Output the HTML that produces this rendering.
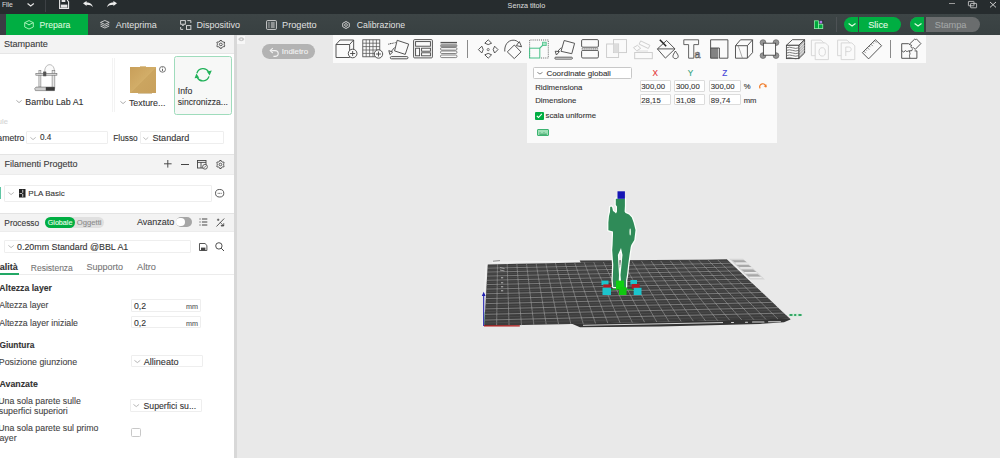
<!DOCTYPE html>
<html><head><meta charset="utf-8">
<style>
*{box-sizing:border-box;margin:0;padding:0}
html,body{width:1000px;height:458px;overflow:hidden;background:#e9e9e9;font-family:"Liberation Sans",sans-serif;color:#333}
.a{position:absolute}
.t{position:absolute;white-space:nowrap;line-height:1;-webkit-text-stroke:0.1px currentColor}
svg{position:absolute;overflow:visible}
</style></head><body>
<div class="a" style="left:0px;top:0px;width:1000.00px;height:13.50px;background:#262c2e"></div>
<div class="t" style="left:1.90px;top:2.04px;font-size:6.8px;color:#d8d8d8;font-weight:400;-webkit-text-stroke:0.05px currentColor">File</div>
<svg style="left:26.6px;top:2.8px;" width="7.40" height="3.60" viewBox="0 0 8 4" preserveAspectRatio="none"><path d="M0.6 0.6 L4 3.4 L7.4 0.6" fill="none" stroke="#e4e4e4" stroke-width="1.3"/></svg>
<div class="a" style="left:45.2px;top:0px;width:0.80px;height:11.70px;background:#3d4145"></div>
<svg style="left:59.1px;top:0px;" width="10.20" height="9.00" viewBox="0 0 10 9" preserveAspectRatio="none"><path d="M0.6 -1 V8.4 H9.4 V2 L7.5 -1" fill="none" stroke="#e6e6e6" stroke-width="1.1"/><rect x="1.8" y="4.6" width="6.4" height="3" fill="#e6e6e6"/><rect x="2.6" y="-1" width="3.6" height="3" fill="#e6e6e6"/></svg>
<svg style="left:83.2px;top:0.9px;" width="10.00" height="6.30" viewBox="0 0 10 7" preserveAspectRatio="none"><path d="M0 2.6 L3.6 0 V1.6 C7 1.6 9.6 3.4 9.8 7 C8.6 5 6.8 4.2 3.6 4.2 V5.6 Z" fill="#eee"/></svg>
<svg style="left:107px;top:0.9px;" width="10.00" height="6.30" viewBox="0 0 10 7" preserveAspectRatio="none"><path d="M10 2.6 L6.4 0 V1.6 C3 1.6 0.4 3.4 0.2 7 C1.4 5 3.2 4.2 6.4 4.2 V5.6 Z" fill="#eee"/></svg>
<div class="t" style="left:507.60px;top:1.71px;font-size:7.2px;color:#dcdcdc;font-weight:400;-webkit-text-stroke:0.05px currentColor">Senza titolo</div>
<div class="a" style="left:948.5px;top:3.4px;width:6.30px;height:0.80px;background:#9a9a9a"></div>
<svg style="left:968px;top:1px;" width="9.00" height="7.00" viewBox="0 0 9 7" preserveAspectRatio="none"><rect x="0.4" y="0.4" width="5.6" height="4.4" rx="0.4" fill="none" stroke="#d5d5d5" stroke-width="0.8"/><rect x="2.6" y="2.4" width="6" height="4.4" rx="0.4" fill="none" stroke="#d5d5d5" stroke-width="0.8"/></svg>
<svg style="left:989.6px;top:1.6px;" width="6.00" height="5.40" viewBox="0 0 6 6" preserveAspectRatio="none"><path d="M0 0 L6 6 M6 0 L0 6" stroke="#d5d5d5" stroke-width="1"/></svg>
<div class="a" style="left:0px;top:13.5px;width:1000.00px;height:21.00px;background:linear-gradient(#3d4546,#384041)"></div>
<div class="a" style="left:0px;top:13.5px;width:6.00px;height:21.00px;background:#3b3d44"></div>
<div class="a" style="left:6px;top:13.5px;width:81.50px;height:21.00px;background:#00ae42"></div>
<svg style="left:24px;top:19.5px;" width="10.00" height="9.50" viewBox="0 0 10 10" preserveAspectRatio="none"><path d="M5 0.6 L9.3 2.8 V7.4 L5 9.5 L0.7 7.4 V2.8 Z M0.7 2.8 L5 5 L9.3 2.8 M5 5 V5.6" fill="none" stroke="#a6f2b6" stroke-width="1"/></svg>
<div class="t" style="left:39.50px;top:20.64px;font-size:8.7px;color:#d7f7dc;font-weight:400;">Prepara</div>
<svg style="left:100.3px;top:20px;" width="9.70" height="8.50" viewBox="0 0 10 9" preserveAspectRatio="none"><path d="M5 0.5 L9.5 2.6 L5 4.7 L0.5 2.6 Z M0.5 4.5 L5 6.6 L9.5 4.5 M0.5 6.4 L5 8.5 L9.5 6.4" fill="none" stroke="#dcdcdc" stroke-width="0.9"/></svg>
<div class="t" style="left:115.70px;top:20.68px;font-size:9px;color:#dedede;font-weight:400;-webkit-text-stroke:0.05px currentColor">Anteprima</div>
<svg style="left:179.7px;top:19.5px;" width="11.50" height="10.00" viewBox="0 0 11 10" preserveAspectRatio="none"><rect x="0.6" y="0.6" width="4.5" height="3.6" fill="none" stroke="#dcdcdc" stroke-width="0.9"/><path d="M1.8 4.4 L2.8 6 L3.8 4.4" fill="none" stroke="#dcdcdc" stroke-width="0.8"/><path d="M7 0.6 H10.4 V3 M0.6 7 V9.4 H3" fill="none" stroke="#dcdcdc" stroke-width="0.9"/><rect x="6.2" y="5.6" width="4.2" height="3.8" fill="none" stroke="#dcdcdc" stroke-width="0.9"/></svg>
<div class="t" style="left:196.50px;top:20.68px;font-size:9px;color:#dedede;font-weight:400;-webkit-text-stroke:0.05px currentColor">Dispositivo</div>
<svg style="left:266px;top:19.5px;" width="11.00" height="10.00" viewBox="0 0 11 10" preserveAspectRatio="none"><rect x="0.6" y="0.6" width="9.8" height="8.8" rx="0.8" fill="none" stroke="#dcdcdc" stroke-width="0.9"/><path d="M2.3 3 H3.6 M4.8 3 H8.7 M2.3 5 H3.6 M4.8 5 H8.7 M2.3 7 H3.6 M4.8 7 H8.7" stroke="#e6e6e6" stroke-width="1"/></svg>
<div class="t" style="left:282.00px;top:20.51px;font-size:9.2px;color:#dedede;font-weight:400;-webkit-text-stroke:0.05px currentColor">Progetto</div>
<svg style="left:342px;top:20.5px;" width="8.00" height="8.00" viewBox="0 0 8 8" preserveAspectRatio="none"><path d="M4 0.5 L7.3 2.3 V5.7 L4 7.5 L0.7 5.7 V2.3 Z" fill="none" stroke="#dcdcdc" stroke-width="0.9"/><circle cx="4" cy="4" r="1.4" fill="none" stroke="#dcdcdc" stroke-width="0.8"/></svg>
<div class="t" style="left:356.80px;top:20.94px;font-size:8.7px;color:#dedede;font-weight:400;-webkit-text-stroke:0.05px currentColor">Calibrazione</div>
<svg style="left:813.6px;top:20px;" width="9.40" height="9.00" viewBox="0 0 9.4 9" preserveAspectRatio="none"><rect x="0" y="0" width="9.4" height="9" fill="#2a3233"/><rect x="0.6" y="0.8" width="4" height="7.8" fill="#00a83c" stroke="#8ef0a8" stroke-width="0.8"/><rect x="4.6" y="4.2" width="4.2" height="4.4" fill="#00a83c" stroke="#8ef0a8" stroke-width="0.8"/><rect x="5.6" y="0.8" width="2.6" height="2.6" fill="#b07ae8"/></svg>
<div class="a" style="left:836.3px;top:17px;width:0.70px;height:15.00px;background:#4d5255"></div>
<div class="a" style="left:843.6px;top:17px;width:57.40px;height:15.00px;background:#00ae42;border-radius:7.5px"></div>
<div class="a" style="left:857.6px;top:16.5px;width:1.80px;height:16.00px;background:#3a4243"></div>
<svg style="left:848.1px;top:22.6px;" width="8.10" height="3.60" viewBox="0 0 8 3.6" preserveAspectRatio="none"><path d="M0.6 0.6 L4 3 L7.4 0.6" fill="none" stroke="#dcfce0" stroke-width="1.2"/></svg>
<div class="t" style="left:868.20px;top:20.81px;font-size:9.2px;color:#e3f9e3;font-weight:400;">Slice</div>
<div class="a" style="left:909.6px;top:17px;width:70.00px;height:15.00px;background:#6a6d6e;border-radius:7.5px"></div>
<div class="a" style="left:909.6px;top:17px;width:14.80px;height:15.00px;background:#00ae42;border-radius:7.5px 0 0 7.5px"></div>
<div class="a" style="left:924.4px;top:16.5px;width:1.20px;height:16.00px;background:#3a4243"></div>
<svg style="left:913.5px;top:22.6px;" width="8.10" height="3.60" viewBox="0 0 8 3.6" preserveAspectRatio="none"><path d="M0.6 0.6 L4 3 L7.4 0.6" fill="none" stroke="#dcfce0" stroke-width="1.2"/></svg>
<div class="t" style="left:934.80px;top:20.81px;font-size:9.2px;color:#a3a6a6;font-weight:400;">Stampa</div>
<div class="a" style="left:0px;top:34.5px;width:234.00px;height:423.50px;background:#fff"></div>
<div class="a" style="left:234px;top:34.5px;width:3.00px;height:423.50px;background:#d8d8d8"></div>
<div class="a" style="left:0px;top:34.5px;width:234.00px;height:19.00px;background:#f3f3f3"></div>
<div class="a" style="left:0px;top:53.2px;width:234.00px;height:0.80px;background:#e6e6e6"></div>
<div class="t" style="left:3.90px;top:40.20px;font-size:9.1px;color:#3a3a3a;font-weight:400;">Stampante</div>
<svg style="left:216px;top:40.2px;" width="9.60" height="8.80" viewBox="0 0 10 10" preserveAspectRatio="none"><path d="M3.20 1.88 L4.10 1.41 L4.22 0.57 L5.78 0.57 L5.90 1.41 L6.80 1.88 L7.66 2.43 L8.45 2.11 L9.23 3.46 L8.56 3.98 L8.60 5.00 L8.56 6.02 L9.23 6.54 L8.45 7.89 L7.66 7.57 L6.80 8.12 L5.90 8.59 L5.78 9.43 L4.22 9.43 L4.10 8.59 L3.20 8.12 L2.34 7.57 L1.55 7.89 L0.77 6.54 L1.44 6.02 L1.40 5.00 L1.44 3.98 L0.77 3.46 L1.55 2.11 L2.34 2.43 Z" fill="none" stroke="#3a3a3a" stroke-width="0.95" stroke-linejoin="round"/><circle cx="5" cy="5" r="1.5" fill="none" stroke="#3a3a3a" stroke-width="0.9"/></svg>
<div class="a" style="left:111.6px;top:58px;width:0.80px;height:54.00px;background:#f3f3f3"></div>
<svg style="left:34px;top:64px;" width="23.60" height="27.00" viewBox="0 0 24 27" preserveAspectRatio="none"><path d="M10.9 7.5 C10.9 -1.5 20.7 -1.5 20.7 7" fill="#fbfbfb" stroke="#9a9a9a" stroke-width="0.7"/><rect x="5" y="6.6" width="2" height="16.5" fill="#e8e8e8" stroke="#777" stroke-width="0.6"/><rect x="18.4" y="6.6" width="2.8" height="18" fill="#e6e6e6" stroke="#777" stroke-width="0.6"/><rect x="1.9" y="9.4" width="21.4" height="1.8" fill="#e0e0e0" stroke="#666" stroke-width="0.6"/><rect x="9.3" y="7.4" width="3.2" height="4.8" fill="#555" rx="0.5"/><path d="M0.7 24.6 L2 23.1 H20.7 V26.6 H1.4 Z" fill="#cfcfcf" stroke="#666" stroke-width="0.6"/><rect x="12" y="23.1" width="9" height="3.5" fill="#3a3a3a"/></svg>
<svg style="left:15.7px;top:100px;" width="6.10" height="3.00" viewBox="0 0 6 3" preserveAspectRatio="none"><path d="M0.4 0.4 L3 2.6 L5.6 0.4" fill="none" stroke="#999" stroke-width="0.8"/></svg>
<div class="t" style="left:25.30px;top:97.77px;font-size:8.9px;color:#333;font-weight:400;">Bambu Lab A1</div>
<div class="a" style="left:114.2px;top:58px;width:0.80px;height:54.00px;background:#f3f3f3"></div>
<div class="a" style="left:130px;top:66.8px;width:26px;height:26.5px;background:linear-gradient(135deg,#c89f5a 0%,#d2ad68 50%,#cba560 52%,#c8a05c 100%)"></div>
<div class="a" style="left:139.9px;top:65.8px;width:6.30px;height:1.00px;background:#ddc596"></div>
<div class="a" style="left:138px;top:93.3px;width:14.00px;height:0.70px;background:#d8c8a8"></div>
<svg style="left:159px;top:65.7px;" width="7.00" height="6.70" viewBox="0 0 7 7" preserveAspectRatio="none"><circle cx="3.5" cy="3.5" r="3" fill="none" stroke="#555" stroke-width="0.8"/><path d="M3.5 3 V5.4" stroke="#555" stroke-width="0.9"/><circle cx="3.5" cy="1.9" r="0.5" fill="#555"/></svg>
<svg style="left:119.6px;top:101px;" width="6.10" height="3.00" viewBox="0 0 6 3" preserveAspectRatio="none"><path d="M0.4 0.4 L3 2.6 L5.6 0.4" fill="none" stroke="#999" stroke-width="0.8"/></svg>
<div class="t" style="left:128.90px;top:98.87px;font-size:8.9px;color:#333;font-weight:400;">Texture...</div>
<div class="a" style="left:174.3px;top:56px;width:57.50px;height:58.70px;background:#f7f8f7;border:1px solid #9fdcbc;border-radius:2.5px"></div>
<svg style="left:194px;top:66.6px;" width="18.30" height="15.20" viewBox="0 0 18.3 15.2" preserveAspectRatio="none"><path d="M2.9 6.2 A6.4 6.4 0 0 1 14.6 4.8" fill="none" stroke="#22b25a" stroke-width="1.3"/><polygon points="12.8,4.4 17.8,3.6 15.6,8.6" fill="#22b25a"/><path d="M15 9.4 A6.4 6.4 0 0 1 3.3 10.6" fill="none" stroke="#22b25a" stroke-width="1.3"/><polygon points="0.6,11.2 5.2,10.8 2.4,6.6" fill="#22b25a"/></svg>
<div class="t" style="left:177.80px;top:87.44px;font-size:8.7px;color:#333;font-weight:400;">Info</div>
<div class="t" style="left:177.80px;top:97.72px;font-size:8.6px;color:#333;font-weight:400;">sincronizza...</div>
<div class="t" style="left:-2.20px;top:118.05px;font-size:7.5px;color:#d4d4d4;font-weight:400;">ule</div>
<div class="t" style="left:-10.85px;top:133.84px;font-size:8.7px;color:#333;font-weight:400;">Diametro</div>
<div class="a" style="left:26.2px;top:131.2px;width:82.30px;height:13.10px;border:1px solid #eeeeee;border-radius:1px"></div>
<svg style="left:29.9px;top:136.5px;" width="6.10" height="3.00" viewBox="0 0 6 3" preserveAspectRatio="none"><path d="M0.4 0.4 L3 2.6 L5.6 0.4" fill="none" stroke="#aaa" stroke-width="0.8"/></svg>
<div class="t" style="left:40.00px;top:134.26px;font-size:8.2px;color:#333;font-weight:400;">0.4</div>
<div class="t" style="left:113.30px;top:134.17px;font-size:8.3px;color:#333;font-weight:400;">Flusso</div>
<div class="a" style="left:140px;top:131.2px;width:83.50px;height:13.10px;border:1px solid #eeeeee;border-radius:1px"></div>
<svg style="left:143.4px;top:136.5px;" width="5.60" height="3.00" viewBox="0 0 6 3" preserveAspectRatio="none"><path d="M0.4 0.4 L3 2.6 L5.6 0.4" fill="none" stroke="#aaa" stroke-width="0.8"/></svg>
<div class="t" style="left:152.50px;top:133.50px;font-size:9.1px;color:#333;font-weight:400;">Standard</div>
<div class="a" style="left:0px;top:153.8px;width:234.00px;height:0.70px;background:#e4e4e4"></div>
<div class="a" style="left:0px;top:154.5px;width:234.00px;height:19.30px;background:#f3f3f3"></div>
<div class="a" style="left:0px;top:173.8px;width:234.00px;height:0.60px;background:#ececec"></div>
<div class="t" style="left:4.60px;top:159.78px;font-size:9px;color:#3a3a3a;font-weight:400;">Filamenti Progetto</div>
<svg style="left:164.4px;top:160.2px;" width="7.60" height="7.60" viewBox="0 0 8 8" preserveAspectRatio="none"><path d="M4 0 V8 M0 4 H8" stroke="#444" stroke-width="1"/></svg>
<svg style="left:181px;top:163.6px;" width="8.00" height="1.00" viewBox="0 0 8 1" preserveAspectRatio="none"><path d="M0 0.5 H8" stroke="#444" stroke-width="1"/></svg>
<svg style="left:197.3px;top:159.5px;" width="10.50" height="9.00" viewBox="0 0 10.5 9" preserveAspectRatio="none"><rect x="0.5" y="0.5" width="8.5" height="7.5" fill="none" stroke="#444" stroke-width="0.9"/><path d="M0.5 2.4 H9 M4 2.4 V8" stroke="#444" stroke-width="0.9"/><circle cx="8" cy="6.8" r="2.4" fill="#f3f3f3" stroke="#444" stroke-width="0.8"/><path d="M7 7.8 L9 5.8" stroke="#444" stroke-width="0.7"/></svg>
<svg style="left:215.5px;top:159.5px;" width="8.90" height="9.00" viewBox="0 0 10 10" preserveAspectRatio="none"><path d="M3.20 1.88 L4.10 1.41 L4.22 0.57 L5.78 0.57 L5.90 1.41 L6.80 1.88 L7.66 2.43 L8.45 2.11 L9.23 3.46 L8.56 3.98 L8.60 5.00 L8.56 6.02 L9.23 6.54 L8.45 7.89 L7.66 7.57 L6.80 8.12 L5.90 8.59 L5.78 9.43 L4.22 9.43 L4.10 8.59 L3.20 8.12 L2.34 7.57 L1.55 7.89 L0.77 6.54 L1.44 6.02 L1.40 5.00 L1.44 3.98 L0.77 3.46 L1.55 2.11 L2.34 2.43 Z" fill="none" stroke="#3a3a3a" stroke-width="0.95" stroke-linejoin="round"/><circle cx="5" cy="5" r="1.5" fill="none" stroke="#3a3a3a" stroke-width="0.9"/></svg>
<div class="a" style="left:0px;top:186.8px;width:1.20px;height:12.20px;background:#5fc6a4"></div>
<div class="a" style="left:3.8px;top:184.5px;width:207.90px;height:17.50px;border:1px solid #eeeeee;border-radius:1px"></div>
<svg style="left:7.6px;top:191.8px;" width="6.20" height="3.00" viewBox="0 0 6 3" preserveAspectRatio="none"><path d="M0.4 0.4 L3 2.6 L5.6 0.4" fill="none" stroke="#aaa" stroke-width="0.8"/></svg>
<svg style="left:18.7px;top:189px;" width="6.50" height="8.50" viewBox="0 0 6.5 8.5" preserveAspectRatio="none"><rect x="0" y="0" width="6.5" height="8.5" fill="#222"/><rect x="3.4" y="0.8" width="0.8" height="3" fill="#fff"/><rect x="3.4" y="4.8" width="0.8" height="3" fill="#fff"/><rect x="0.6" y="4" width="2.4" height="0.7" fill="#fff"/></svg>
<div class="t" style="left:28.30px;top:190.03px;font-size:8px;color:#333;font-weight:400;">PLA Basic</div>
<svg style="left:215px;top:189px;" width="9.30" height="8.50" viewBox="0 0 9 9" preserveAspectRatio="none"><circle cx="4.5" cy="4.5" r="4" fill="none" stroke="#444" stroke-width="0.9"/><path d="M2.6 4.6 H6.4" stroke="#444" stroke-width="0.9" stroke-dasharray="0.9 0.6"/></svg>
<div class="a" style="left:0px;top:213.2px;width:234.00px;height:0.80px;background:#e4e4e4"></div>
<div class="a" style="left:0px;top:214px;width:234.00px;height:17.20px;background:#f3f3f3"></div>
<div class="a" style="left:0px;top:231.2px;width:234.00px;height:0.60px;background:#ececec"></div>
<div class="t" style="left:4.30px;top:218.69px;font-size:8.4px;color:#3a3a3a;font-weight:400;">Processo</div>
<div class="a" style="left:45px;top:216.9px;width:59.00px;height:11.10px;background:#e0e0e0;border-radius:5.5px"></div>
<div class="a" style="left:45.2px;top:216.9px;width:30.30px;height:11.10px;background:#00ae42;border-radius:5.5px"></div>
<div class="t" style="left:47.70px;top:219.31px;font-size:7.2px;color:#eaffea;font-weight:400;">Globale</div>
<div class="t" style="left:76.70px;top:219.08px;font-size:7.7px;color:#8a8a8a;font-weight:400;">Oggetti</div>
<div class="t" style="left:137.00px;top:218.18px;font-size:9px;color:#3a3a3a;font-weight:400;">Avanzato</div>
<div class="a" style="left:175.8px;top:217.4px;width:16.10px;height:9.50px;background:#a6a6a6;border-radius:5px"></div>
<div class="a" style="left:176.3px;top:217.9px;width:8.6px;height:8.6px;background:#fff;border-radius:50%"></div>
<svg style="left:198.7px;top:218px;" width="8.80" height="8.00" viewBox="0 0 9 8" preserveAspectRatio="none"><path d="M0.5 1 H1.6 M3 1 H8.5 M0.5 4 H1.6 M3 4 H8.5 M0.5 7 H1.6 M3 7 H8.5" stroke="#444" stroke-width="1"/></svg>
<svg style="left:215.6px;top:217.5px;" width="8.70" height="9.00" viewBox="0 0 9 9" preserveAspectRatio="none"><path d="M0.5 8.5 L8.5 0.5" stroke="#444" stroke-width="0.9"/><path d="M1 1.8 H3.5 M2.25 0.6 V3" stroke="#444" stroke-width="0.8"/><path d="M5 7.5 H8 " stroke="#444" stroke-width="0.8"/><path d="M4.2 4.2 L8 8 M8 5.2 V8 H5.2" fill="none" stroke="#444" stroke-width="0.8"/></svg>
<div class="a" style="left:3.9px;top:240.2px;width:186.90px;height:13.00px;border:1px solid #eeeeee;border-radius:1px"></div>
<svg style="left:7.6px;top:245.3px;" width="6.20" height="3.00" viewBox="0 0 6 3" preserveAspectRatio="none"><path d="M0.4 0.4 L3 2.6 L5.6 0.4" fill="none" stroke="#aaa" stroke-width="0.8"/></svg>
<div class="t" style="left:17.00px;top:242.97px;font-size:8.9px;color:#333;font-weight:400;">0.20mm Standard @BBL A1</div>
<svg style="left:198.7px;top:242.5px;" width="8.40" height="8.00" viewBox="0 0 8.4 8" preserveAspectRatio="none"><path d="M0.5 0.5 H6 L7.9 2.4 V7.5 H0.5 Z" fill="none" stroke="#444" stroke-width="0.9"/><rect x="2" y="4.6" width="4.4" height="2.9" fill="#444"/></svg>
<svg style="left:215px;top:242px;" width="9.40" height="9.50" viewBox="0 0 9.4 9.5" preserveAspectRatio="none"><circle cx="3.9" cy="3.9" r="3.2" fill="none" stroke="#444" stroke-width="0.95"/><path d="M6.2 6.2 L9 9" stroke="#444" stroke-width="1"/></svg>
<div class="t" style="left:-12.80px;top:263.18px;font-size:9px;color:#333;font-weight:700;">Qualità</div>
<div class="t" style="left:30.80px;top:263.60px;font-size:8.5px;color:#777;font-weight:400;">Resistenza</div>
<div class="t" style="left:86.50px;top:263.18px;font-size:9px;color:#777;font-weight:400;">Supporto</div>
<div class="t" style="left:137.00px;top:263.31px;font-size:9.2px;color:#777;font-weight:400;">Altro</div>
<div class="a" style="left:0px;top:274.2px;width:234.00px;height:0.60px;background:#ececec"></div>
<div class="a" style="left:0px;top:273.2px;width:19.00px;height:1.60px;background:#22a865"></div>
<div class="t" style="left:-0.70px;top:284.24px;font-size:8.7px;color:#333;font-weight:700;">Altezza layer</div>
<div class="t" style="left:-0.80px;top:301.42px;font-size:8.6px;color:#444;font-weight:400;">Altezza layer</div>
<div class="a" style="left:130.5px;top:298.7px;width:70.60px;height:13.00px;border:1px solid #eeeeee;border-radius:1px"></div>
<div class="t" style="left:133.90px;top:301.64px;font-size:8.7px;color:#333;font-weight:400;">0,2</div>
<div class="t" style="left:186.00px;top:303.21px;font-size:7.2px;color:#555;font-weight:400;">mm</div>
<div class="t" style="left:-0.80px;top:318.64px;font-size:8.7px;color:#444;font-weight:400;">Altezza layer iniziale</div>
<div class="a" style="left:130.5px;top:315.9px;width:70.60px;height:12.60px;border:1px solid #eeeeee;border-radius:1px"></div>
<div class="t" style="left:133.90px;top:318.84px;font-size:8.7px;color:#333;font-weight:400;">0,2</div>
<div class="t" style="left:186.00px;top:320.41px;font-size:7.2px;color:#555;font-weight:400;">mm</div>
<div class="t" style="left:-0.60px;top:340.79px;font-size:8.4px;color:#333;font-weight:700;">Giuntura</div>
<div class="t" style="left:-1.20px;top:357.75px;font-size:8.8px;color:#444;font-weight:400;">Posizione giunzione</div>
<div class="a" style="left:130.5px;top:354.7px;width:72.50px;height:12.60px;border:1px solid #eeeeee;border-radius:1px"></div>
<svg style="left:133.6px;top:359.8px;" width="6.70" height="3.00" viewBox="0 0 6 3" preserveAspectRatio="none"><path d="M0.4 0.4 L3 2.6 L5.6 0.4" fill="none" stroke="#aaa" stroke-width="0.8"/></svg>
<div class="t" style="left:143.70px;top:357.60px;font-size:9.1px;color:#333;font-weight:400;">Allineato</div>
<div class="t" style="left:-0.50px;top:379.95px;font-size:8.8px;color:#333;font-weight:700;">Avanzate</div>
<div class="t" style="left:-1.80px;top:396.95px;font-size:8.8px;color:#444;font-weight:400;">Una sola parete sulle</div>
<div class="t" style="left:-1.20px;top:407.25px;font-size:8.8px;color:#444;font-weight:400;">superfici superiori</div>
<div class="a" style="left:129.6px;top:398.8px;width:72.00px;height:13.20px;border:1px solid #eeeeee;border-radius:1px"></div>
<svg style="left:133px;top:403.8px;" width="6.50" height="3.00" viewBox="0 0 6 3" preserveAspectRatio="none"><path d="M0.4 0.4 L3 2.6 L5.6 0.4" fill="none" stroke="#aaa" stroke-width="0.8"/></svg>
<div class="t" style="left:143.50px;top:401.84px;font-size:8.7px;color:#333;font-weight:400;">Superfici su...</div>
<div class="t" style="left:-1.80px;top:424.05px;font-size:8.8px;color:#444;font-weight:400;">Una sola parete sul primo</div>
<div class="t" style="left:-2.50px;top:433.65px;font-size:8.8px;color:#444;font-weight:400;">layer</div>
<div class="a" style="left:130.8px;top:428.3px;width:10.30px;height:8.90px;border:1px solid #c8c8c8;border-radius:1.5px"></div>
<div class="a" style="left:237px;top:34.5px;width:763.00px;height:423.50px;background:#e9e9e9"></div>
<div class="a" style="left:237px;top:35.5px;width:8.00px;height:8.00px;background:#f7f7f7"></div>
<svg style="left:237.8px;top:37px;" width="6.60" height="4.60" viewBox="0 0 6.6 4.6" preserveAspectRatio="none"><path d="M0.2 2.3 C1.8 -0.3 4.8 -0.3 6.4 2.3 C4.8 4.9 1.8 4.9 0.2 2.3 Z" fill="#c8c8c8"/><circle cx="3.3" cy="2.3" r="0.9" fill="#f0f0f0"/></svg>
<div class="a" style="left:262px;top:44px;width:52.50px;height:14.80px;background:#b3b3b3;border-radius:7.4px"></div>
<svg style="left:269px;top:46.5px;" width="10.00" height="10.00" viewBox="0 0 10 10" preserveAspectRatio="none"><path d="M2.2 3.6 H6 C8 3.6 9.2 5 9.2 6.6 C9.2 8.2 8 9.4 6 9.4 H4.4" fill="none" stroke="#f2f2f2" stroke-width="1.1"/><path d="M3.8 1.2 L1.2 3.6 L3.8 6" fill="none" stroke="#f2f2f2" stroke-width="1.1"/></svg>
<div class="t" style="left:281.80px;top:48.31px;font-size:7.9px;color:#f4f4f4;font-weight:400;">Indietro</div>
<div class="a" style="left:332.5px;top:35px;width:593.00px;height:27.50px;background:#fafafa"></div>
<svg style="left:334.8px;top:38.5px;" width="23.20" height="19.50" viewBox="0 0 23 19.5" preserveAspectRatio="none"><path d="M1 5.5 H14.5 V18.5 H1 Z M1 5.5 L5 1 H18.5 L14.5 5.5 M18.5 1 V12" fill="none" stroke="#444" stroke-width="0.9"/><circle cx="17.5" cy="14.5" r="4.3" fill="#fafafa" stroke="#444" stroke-width="0.9"/><path d="M15 14.5 H20 M17.5 12 V17" stroke="#444" stroke-width="0.9"/></svg>
<svg style="left:361.5px;top:38.5px;" width="21.20" height="19.50" viewBox="0 0 21.2 19.5" preserveAspectRatio="none"><rect x="0.8" y="0.8" width="17" height="17" fill="none" stroke="#444" stroke-width="0.8"/><path d="M4.2 0.8 V17.8" stroke="#555" stroke-width="0.75"/><path d="M7.6 0.8 V17.8" stroke="#555" stroke-width="0.75"/><path d="M11.0 0.8 V17.8" stroke="#555" stroke-width="0.75"/><path d="M14.4 0.8 V17.8" stroke="#555" stroke-width="0.75"/><path d="M0.8 4.2 H17.8" stroke="#555" stroke-width="0.75"/><path d="M0.8 7.6 H17.8" stroke="#555" stroke-width="0.75"/><path d="M0.8 11.0 H17.8" stroke="#555" stroke-width="0.75"/><path d="M0.8 14.4 H17.8" stroke="#555" stroke-width="0.75"/><circle cx="16.5" cy="15" r="4.2" fill="#fafafa" stroke="#444" stroke-width="0.9"/><path d="M14 15 H19 M16.5 12.5 V17.5" stroke="#444" stroke-width="0.9"/></svg>
<svg style="left:387.8px;top:38.5px;" width="21.20" height="19.50" viewBox="0 0 21 19.5" preserveAspectRatio="none"><path d="M9.1 1.3 L20.5 5.1 L17.1 15.4 L6.5 11.9 Z" fill="none" stroke="#444" stroke-width="0.9"/><rect x="2.3" y="17.6" width="17.5" height="2.2" rx="1.1" fill="none" stroke="#444" stroke-width="0.9"/><path d="M6.5 8.5 L2.8 13" fill="none" stroke="#444" stroke-width="0.9"/><path d="M0.8 11.6 L4.6 13.1 L1.9 15.7 Z" fill="none" stroke="#444" stroke-width="0.9"/><path d="M0.2 5.2 L7.6 3.6" stroke="#555" stroke-width="1" stroke-dasharray="1.2 0.5"/></svg>
<svg style="left:413px;top:38.5px;" width="20.00" height="19.50" viewBox="0 0 20 19.5" preserveAspectRatio="none"><rect x="0.6" y="0.6" width="18.8" height="18.3" rx="1" fill="none" stroke="#444" stroke-width="0.9"/><rect x="2.6" y="2.6" width="14.8" height="4.6" fill="none" stroke="#444" stroke-width="0.9"/><rect x="2.6" y="9.2" width="4" height="7.6" fill="none" stroke="#444" stroke-width="0.9"/><rect x="8.6" y="9.2" width="8.8" height="3" fill="none" stroke="#444" stroke-width="0.9"/><rect x="8.6" y="13.8" width="8.8" height="3" fill="none" stroke="#444" stroke-width="0.9"/></svg>
<svg style="left:440px;top:38.5px;" width="17.50" height="19.50" viewBox="0 0 17.5 19.5" preserveAspectRatio="none"><rect x="0.5" y="2.9" width="16.5" height="1.4" fill="#555"/><rect x="0.5" y="5.4" width="16.5" height="2.6" rx="1.2" fill="#999" stroke="#777" stroke-width="0.6"/><rect x="0.5" y="8.6" width="16.5" height="2.5" rx="1.2" fill="none" stroke="#666" stroke-width="0.8"/><rect x="0.5" y="12" width="16.5" height="2.5" rx="1.2" fill="none" stroke="#666" stroke-width="0.8"/><rect x="0.5" y="16" width="16.5" height="2.6" rx="1.2" fill="none" stroke="#666" stroke-width="0.8"/></svg>
<div class="a" style="left:467px;top:40px;width:0.80px;height:18.00px;background:#8a8a8a"></div>
<svg style="left:478px;top:38.5px;" width="20.00" height="19.50" viewBox="0 0 20 19.5" preserveAspectRatio="none"><path d="M10.2 0.8 L13.6 4.2 L10.2 5.6 L6.8 4.2 Z M10.2 19.2 L13.6 15.8 L10.2 14.4 L6.8 15.8 Z M0.4 10.6 L3.8 7.2 L5.2 10.6 L3.8 14 Z M20 10.6 L16.6 7.2 L15.2 10.6 L16.6 14 Z" fill="none" stroke="#444" stroke-width="0.9"/><circle cx="10.2" cy="10.6" r="1.1" fill="none" stroke="#555" stroke-width="0.8"/></svg>
<svg style="left:503.5px;top:38.5px;" width="20.50" height="19.50" viewBox="0 0 20.5 19.5" preserveAspectRatio="none"><path d="M10.3 6 L17 12.9 L10.3 19.6 L3.3 12.9 Z" fill="none" stroke="#444" stroke-width="0.9"/><path d="M0.8 12.5 C0.2 6 4 1.3 9 1.2 C11.5 1.1 13.5 2 15 4" fill="none" stroke="#444" stroke-width="0.9"/><path d="M15.3 2.6 L17.6 7.8 L12.3 6.6 Z" fill="none" stroke="#444" stroke-width="0.9"/></svg>
<svg style="left:529px;top:38.5px;" width="20.00" height="19.50" viewBox="0 0 20 19.5" preserveAspectRatio="none"><path d="M0.6 19 V1 H19.3 V19 H11" fill="none" stroke="#555" stroke-width="0.9" stroke-dasharray="1 1.1"/><rect x="0.6" y="9.2" width="10.2" height="9.8" fill="none" stroke="#48c088" stroke-width="1"/><path d="M10.8 9.2 L15 5" stroke="#48c088" stroke-width="1.1"/><rect x="13.6" y="3.2" width="3.6" height="3.4" fill="#a8e6c6" stroke="#48c088" stroke-width="0.8"/></svg>
<svg style="left:555.4px;top:38.5px;" width="19.60" height="19.50" viewBox="0 0 19.6 19.5" preserveAspectRatio="none"><path d="M9.2 1.5 L19.6 4.3 L16.8 14.7 L6 12.3 Z" fill="none" stroke="#444" stroke-width="0.9"/><rect x="-0.2" y="18.2" width="17.6" height="1.9" rx="0.95" fill="none" stroke="#444" stroke-width="0.9"/><path d="M6.2 8.6 L3 12" fill="none" stroke="#444" stroke-width="0.9"/><path d="M0.2 12.2 L4.4 12.6 L1.4 16 Z" fill="none" stroke="#444" stroke-width="0.9"/></svg>
<svg style="left:581px;top:38.5px;" width="18.00" height="19.50" viewBox="0 0 18 19.5" preserveAspectRatio="none"><rect x="0.6" y="0.6" width="16.8" height="7.6" rx="1.2" fill="none" stroke="#444" stroke-width="0.9"/><rect x="0.6" y="11.4" width="16.8" height="7.6" rx="1.2" fill="none" stroke="#444" stroke-width="0.9"/><path d="M0.6 9.8 H17.4" stroke="#888" stroke-width="1.3" stroke-dasharray="1.4 0.5"/></svg>
<svg style="left:605.5px;top:38.5px;" width="21.50" height="19.50" viewBox="0 0 21.5 19.5" preserveAspectRatio="none"><rect x="0.6" y="5" width="12" height="13.5" fill="none" stroke="#c9c9c9" stroke-width="0.9"/><rect x="7.5" y="0.6" width="13" height="13" fill="none" stroke="#c9c9c9" stroke-width="0.9"/><rect x="7.5" y="5" width="5" height="8.6" fill="#ddd"/></svg>
<svg style="left:632.7px;top:38.5px;" width="19.30" height="19.50" viewBox="0 0 19.3 19.5" preserveAspectRatio="none"><rect x="1.7" y="13.5" width="17.6" height="6.2" fill="none" stroke="#c9c9c9" stroke-width="0.9"/><path d="M7.7 1.9 L16.9 6.3 L15.3 9.5 L6.1 5.1 Z" fill="none" stroke="#c9c9c9" stroke-width="0.9"/><path d="M0.5 8.6 L4.5 6.3 L7.7 9.3 L3.7 11.9 Z" fill="none" stroke="#c9c9c9" stroke-width="0.9"/><path d="M4 12 H15" stroke="#d6d6d6" stroke-width="0.8"/></svg>
<svg style="left:656.8px;top:38.5px;" width="21.80" height="19.50" viewBox="0 0 21.8 19.5" preserveAspectRatio="none"><path d="M0.4 9.9 L9.6 1.5 L18 9.9 L8.4 19.1 Z" fill="none" stroke="#444" stroke-width="0.9"/><path d="M0.4 9.9 H18" stroke="#444" stroke-width="0.9"/><path d="M2.8 0.8 L9.2 7.2" stroke="#222" stroke-width="1.5"/><path d="M18.4 12 C17 14.5 15.8 16 16 17.6 C16.2 19 17.2 19.6 18.6 19.6 C20 19.6 21 18.8 21.2 17.6 C21.4 16 20 14.5 18.4 12 Z" fill="none" stroke="#444" stroke-width="0.9"/></svg>
<svg style="left:683px;top:38.5px;" width="19.70" height="19.50" viewBox="0 0 19.7 19.5" preserveAspectRatio="none"><path d="M0.8 0.8 H15.6 V5.6 H10.8 V19.2 H5.6 V5.6 H0.8 Z" fill="none" stroke="#555" stroke-width="0.9" stroke-linejoin="round"/><text x="11.4" y="19.4" font-size="10.5" fill="none" stroke="#555" stroke-width="0.6" font-family="Liberation Sans" style="-webkit-text-stroke:0">a</text></svg>
<svg style="left:709.5px;top:38.5px;" width="18.50" height="19.50" viewBox="0 0 18.5 19.5" preserveAspectRatio="none"><defs><pattern id="hp" width="1.6" height="1.6" patternUnits="userSpaceOnUse"><rect width="1.6" height="1.6" fill="#cfcfcf"/><path d="M0 0 L1.6 1.6 M1.6 0 L0 1.6" stroke="#555" stroke-width="0.5"/></pattern></defs><rect x="0.6" y="9" width="7.6" height="10.2" fill="url(#hp)"/><path d="M0.6 0.8 H17.9 V19.2 H9.4 V9 H0.6 Z" fill="none" stroke="#444" stroke-width="0.9"/><path d="M0.6 9 V19.2 H8.2" fill="none" stroke="#444" stroke-width="0.9"/></svg>
<svg style="left:735px;top:38.5px;" width="18.70" height="19.50" viewBox="0 0 18.7 19.5" preserveAspectRatio="none"><path d="M0.5 6.7 H12.4 V19.2 H0.5 Z M0.5 6.7 L5.5 0.8 H17.6 L12.4 6.7 M17.6 0.8 V13.6 L12.4 19.2" fill="none" stroke="#444" stroke-width="0.9"/><path d="M3.2 7 L5 11.8 L7.4 19" stroke="#777" stroke-width="0.6" fill="none"/></svg>
<svg style="left:760px;top:38.5px;" width="19.00" height="19.50" viewBox="0 0 19 19.5" preserveAspectRatio="none"><defs><pattern id="hp2" width="1.5" height="1.5" patternUnits="userSpaceOnUse"><rect width="1.5" height="1.5" fill="#d8d8d8"/><path d="M0 0 L1.5 1.5 M1.5 0 L0 1.5" stroke="#666" stroke-width="0.45"/></pattern></defs><circle cx="3" cy="3.6" r="2.9" fill="url(#hp2)" stroke="#555" stroke-width="0.6"/><circle cx="16" cy="3.6" r="2.9" fill="url(#hp2)" stroke="#555" stroke-width="0.6"/><circle cx="3" cy="16.6" r="2.9" fill="url(#hp2)" stroke="#555" stroke-width="0.6"/><circle cx="16" cy="16.6" r="2.9" fill="url(#hp2)" stroke="#555" stroke-width="0.6"/><rect x="3.4" y="4.2" width="12.2" height="12" fill="#fafafa" stroke="#444" stroke-width="0.9"/></svg>
<svg style="left:786px;top:38.5px;" width="19.00" height="19.50" viewBox="0 0 19 19.5" preserveAspectRatio="none"><path d="M0.4 6.3 L6.4 0.7 H18.6 L12.8 6.3 Z" fill="#fafafa" stroke="#444" stroke-width="0.9"/><path d="M12.8 6.3 L18.6 0.7 V14 L12.8 19.6 Z" fill="#bbb" stroke="#444" stroke-width="0.9"/><path d="M13 9.0 L18.4 3.6" stroke="#fafafa" stroke-width="0.6"/><path d="M13 11.6 L18.4 6.2" stroke="#fafafa" stroke-width="0.6"/><path d="M13 14.2 L18.4 8.8" stroke="#fafafa" stroke-width="0.6"/><path d="M13 16.8 L18.4 11.4" stroke="#fafafa" stroke-width="0.6"/><rect x="0.4" y="6.3" width="12.4" height="13.3" fill="#fafafa" stroke="#444" stroke-width="0.9"/><path d="M0.4 8.8 Q3.5 7.6 6.6 8.8 T12.8 8.8" stroke="#555" stroke-width="0.75" fill="none"/><path d="M0.4 11.4 Q3.5 10.2 6.6 11.4 T12.8 11.4" stroke="#555" stroke-width="0.75" fill="none"/><path d="M0.4 14.0 Q3.5 12.8 6.6 14.0 T12.8 14.0" stroke="#555" stroke-width="0.75" fill="none"/><path d="M0.4 16.6 Q3.5 15.4 6.6 16.6 T12.8 16.6" stroke="#555" stroke-width="0.75" fill="none"/><path d="M0.4 19.200000000000003 Q3.5 18.0 6.6 19.200000000000003 T12.8 19.200000000000003" stroke="#555" stroke-width="0.75" fill="none"/></svg>
<svg style="left:811px;top:38.5px;" width="18.00" height="19.50" viewBox="0 0 18 19.5" preserveAspectRatio="none"><path d="M0.4 1.1 H10 L12.6 3.7 V16.7 H0.4 Z" fill="#fafafa" stroke="#d4d4d4" stroke-width="0.9"/><path d="M4.2 3.9 H14.4 L17.4 6.9 V20.6 H4.2 Z" fill="#fafafa" stroke="#d4d4d4" stroke-width="0.9"/><ellipse cx="11.2" cy="12.9" rx="3.2" ry="4.2" fill="none" stroke="#d4d4d4" stroke-width="0.9"/></svg>
<svg style="left:836.6px;top:38.5px;" width="18.20" height="19.50" viewBox="0 0 18.2 19.5" preserveAspectRatio="none"><path d="M0.6 1.1 H10 L12.6 3.7 V16.7 H0.6 Z" fill="#fafafa" stroke="#d4d4d4" stroke-width="0.9"/><path d="M4.2 3.9 H14.8 L17.8 6.9 V20.6 H4.2 Z" fill="#fafafa" stroke="#d4d4d4" stroke-width="0.9"/><path d="M8.8 17 V8 H11.8 C15 8 15 12.6 11.8 12.6 H8.8" fill="none" stroke="#d4d4d4" stroke-width="0.9"/></svg>
<svg style="left:862px;top:38.5px;" width="20.00" height="19.50" viewBox="0 0 20 19.5" preserveAspectRatio="none"><path d="M0.4 13.7 L13.4 0.7 L19.6 6.7 L6.6 19.9 Z" fill="none" stroke="#444" stroke-width="0.9"/><path d="M1.90 12.20 L3.80 14.10" stroke="#444" stroke-width="0.6"/><path d="M3.65 10.45 L4.85 11.65" stroke="#444" stroke-width="0.6"/><path d="M5.40 8.70 L7.30 10.60" stroke="#444" stroke-width="0.6"/><path d="M7.15 6.95 L8.35 8.15" stroke="#444" stroke-width="0.6"/><path d="M8.90 5.20 L10.80 7.10" stroke="#444" stroke-width="0.6"/><path d="M10.65 3.45 L11.85 4.65" stroke="#444" stroke-width="0.6"/><path d="M12.40 1.70 L14.30 3.60" stroke="#444" stroke-width="0.6"/></svg>
<div class="a" style="left:890.2px;top:40px;width:0.80px;height:18.00px;background:#8a8a8a"></div>
<svg style="left:900.7px;top:38.5px;" width="20.30" height="19.50" viewBox="0 0 20.3 19.5" preserveAspectRatio="none"><path d="M7.8 4.7 H0.7 V19.3 H15.9 V11.9 H13.6" fill="none" stroke="#444" stroke-width="0.9"/><path d="M0.7 11.6 L2.6 13 L4.6 11.6 C5.2 12.6 6.3 12.8 7.2 12 L8.7 11.8 C8 13.5 9.6 14.2 8.7 15.8 C8 17 9 18 8.7 19.3" fill="none" stroke="#444" stroke-width="0.9"/><path d="M8.7 11.8 H10.5 C10.2 10.8 11.5 10.3 12 11.2" fill="none" stroke="#444" stroke-width="0.9"/><path d="M8.2 5.4 L13.6 0.2 C14.2 0.8 15.2 0.6 15.4 -0.1 L19.9 4.6 L14.2 10.4 L12.4 8.6 C11.5 9.4 10.4 9.2 10.2 8.2 C9.6 7.4 10.4 6.6 10.8 6.4 Z" fill="none" stroke="#444" stroke-width="0.9"/></svg>
<div class="a" style="left:527px;top:62px;width:249.70px;height:81.00px;background:#fafafa"></div>
<div class="a" style="left:533.4px;top:67.4px;width:98.90px;height:11.20px;background:#fff;border:1px solid #c8c8c8;border-radius:1.5px"></div>
<svg style="left:536.7px;top:71.8px;" width="5.90" height="2.40" viewBox="0 0 6 2.4" preserveAspectRatio="none"><path d="M0.4 0.4 L3 2 L5.6 0.4" fill="none" stroke="#666" stroke-width="0.8"/></svg>
<div class="t" style="left:546.40px;top:69.83px;font-size:8px;color:#333;font-weight:400;">Coordinate globali</div>
<div class="t" style="left:652.60px;top:69.86px;font-size:8.2px;color:#e5383b;font-weight:400;">X</div>
<div class="t" style="left:687.80px;top:69.86px;font-size:8.2px;color:#2fa37a;font-weight:400;">Y</div>
<div class="t" style="left:722.30px;top:69.86px;font-size:8.2px;color:#4545d8;font-weight:400;">Z</div>
<div class="t" style="left:535.20px;top:83.50px;font-size:7.8px;color:#333;font-weight:400;">Ridimensiona</div>
<div class="t" style="left:535.20px;top:96.90px;font-size:7.8px;color:#333;font-weight:400;">Dimensione</div>
<div class="a" style="left:639.8px;top:80.2px;width:31.20px;height:11.60px;background:#fff;border:1px solid #dcdcdc;border-radius:1px"></div>
<div class="a" style="left:639.8px;top:94.2px;width:31.20px;height:11.10px;background:#fff;border:1px solid #dcdcdc;border-radius:1px"></div>
<div class="a" style="left:674.3px;top:80.2px;width:31.20px;height:11.60px;background:#fff;border:1px solid #dcdcdc;border-radius:1px"></div>
<div class="a" style="left:674.3px;top:94.2px;width:31.20px;height:11.10px;background:#fff;border:1px solid #dcdcdc;border-radius:1px"></div>
<div class="a" style="left:709.2px;top:80.2px;width:31.50px;height:11.60px;background:#fff;border:1px solid #dcdcdc;border-radius:1px"></div>
<div class="a" style="left:709.2px;top:94.2px;width:31.50px;height:11.10px;background:#fff;border:1px solid #dcdcdc;border-radius:1px"></div>
<div class="t" style="left:641.30px;top:83.04px;font-size:7.75px;color:#333;font-weight:400;">300,00</div>
<div class="t" style="left:676.00px;top:83.04px;font-size:7.75px;color:#333;font-weight:400;">300,00</div>
<div class="t" style="left:710.80px;top:83.04px;font-size:7.75px;color:#333;font-weight:400;">300,00</div>
<div class="t" style="left:641.30px;top:96.54px;font-size:7.75px;color:#333;font-weight:400;">28,15</div>
<div class="t" style="left:676.00px;top:96.54px;font-size:7.75px;color:#333;font-weight:400;">31,08</div>
<div class="t" style="left:710.80px;top:96.54px;font-size:7.75px;color:#333;font-weight:400;">89,74</div>
<div class="t" style="left:743.70px;top:83.08px;font-size:7.7px;color:#333;font-weight:400;">%</div>
<div class="t" style="left:743.70px;top:96.58px;font-size:7.7px;color:#333;font-weight:400;">mm</div>
<svg style="left:759.2px;top:83.2px;" width="8.10" height="6.80" viewBox="0 0 8 7" preserveAspectRatio="none"><path d="M1.2 5.5 A3 3 0 1 1 6.6 4.4" fill="none" stroke="#f07c2a" stroke-width="1.2"/><path d="M4.6 3.6 L7.6 4.2 L7.2 1.2 Z" fill="#f07c2a"/></svg>
<div class="a" style="left:535.2px;top:111.6px;width:8.60px;height:8.20px;background:#00ae42;border-radius:1px"></div>
<svg style="left:536.3px;top:113px;" width="6.40" height="5.50" viewBox="0 0 6.4 5.5" preserveAspectRatio="none"><path d="M0.8 2.8 L2.5 4.5 L5.8 0.8" fill="none" stroke="#fff" stroke-width="1.1"/></svg>
<div class="t" style="left:545.60px;top:112.24px;font-size:7.75px;color:#333;font-weight:400;">scala uniforme</div>
<div class="a" style="left:537px;top:128.7px;width:12.30px;height:7.80px;background:#9fe0b7;border:0.7px solid #3cb371;border-radius:1px"></div>
<svg style="left:539px;top:130.5px;" width="8.30" height="4.20" viewBox="0 0 8.3 4.2" preserveAspectRatio="none"><path d="M0.5 3.5 H7.8 M1 3.5 V1 M3 3.5 V2 M5 3.5 V1 M7 3.5 V2" fill="none" stroke="#2c9a5a" stroke-width="0.6"/></svg>
<svg style="left:0;top:0" width="1000" height="458" viewBox="0 0 1000 458"><polygon points="487.80,264.40 518.06,263.79 548.21,263.19 578.26,262.58 608.21,261.98 638.06,261.38 667.81,260.79 697.45,260.19 727.00,259.60 727.00,259.60 733.33,265.55 740.03,271.85 747.13,278.51 754.65,285.59 762.66,293.10 771.18,301.11 780.27,309.66 790.00,318.80 790.00,318.80 752.35,319.69 714.55,320.58 676.57,321.47 638.43,322.37 600.13,323.27 561.65,324.18 523.01,325.09 484.20,326.00 484.20,326.00 484.76,316.46 485.28,307.55 485.77,299.21 486.22,291.38 486.65,284.03 487.06,277.10 487.44,270.57 487.80,264.40" fill="#3d3d3d"/><polygon points="572.5,324.0 580,327.3 660,326.4 760,323.9 784,322.2 790.5,319.4 790,318.6 575,323.4" fill="#333333"/><polygon points="579.6,260.6 727,259.4 727.5,261.5 581,262.8" fill="#3f3f3f"/><line x1="497.49" y1="264.21" x2="496.64" y2="325.71" stroke="#9a9a9a" stroke-width="0.65"/><line x1="507.18" y1="264.01" x2="509.06" y2="325.41" stroke="#9a9a9a" stroke-width="0.65"/><line x1="516.85" y1="263.82" x2="521.46" y2="325.12" stroke="#9a9a9a" stroke-width="0.65"/><line x1="526.51" y1="263.62" x2="533.85" y2="324.83" stroke="#9a9a9a" stroke-width="0.65"/><line x1="536.16" y1="263.43" x2="546.22" y2="324.54" stroke="#9a9a9a" stroke-width="0.65"/><line x1="545.80" y1="263.24" x2="558.57" y2="324.25" stroke="#9a9a9a" stroke-width="0.65"/><line x1="555.43" y1="263.04" x2="570.90" y2="323.96" stroke="#9a9a9a" stroke-width="0.65"/><line x1="565.05" y1="262.85" x2="583.22" y2="323.67" stroke="#9a9a9a" stroke-width="0.65"/><line x1="574.66" y1="262.66" x2="595.52" y2="323.38" stroke="#9a9a9a" stroke-width="0.65"/><line x1="584.26" y1="262.46" x2="607.80" y2="323.09" stroke="#9a9a9a" stroke-width="0.65"/><line x1="593.85" y1="262.27" x2="620.07" y2="322.80" stroke="#9a9a9a" stroke-width="0.65"/><line x1="603.43" y1="262.08" x2="632.32" y2="322.51" stroke="#9a9a9a" stroke-width="0.65"/><line x1="613.00" y1="261.89" x2="644.55" y2="322.22" stroke="#9a9a9a" stroke-width="0.65"/><line x1="622.55" y1="261.70" x2="656.76" y2="321.94" stroke="#9a9a9a" stroke-width="0.65"/><line x1="632.10" y1="261.50" x2="668.96" y2="321.65" stroke="#9a9a9a" stroke-width="0.65"/><line x1="641.64" y1="261.31" x2="681.14" y2="321.36" stroke="#9a9a9a" stroke-width="0.65"/><line x1="651.16" y1="261.12" x2="693.30" y2="321.08" stroke="#9a9a9a" stroke-width="0.65"/><line x1="660.68" y1="260.93" x2="705.45" y2="320.79" stroke="#9a9a9a" stroke-width="0.65"/><line x1="670.18" y1="260.74" x2="717.58" y2="320.51" stroke="#9a9a9a" stroke-width="0.65"/><line x1="679.68" y1="260.55" x2="729.69" y2="320.22" stroke="#9a9a9a" stroke-width="0.65"/><line x1="689.16" y1="260.36" x2="741.78" y2="319.94" stroke="#9a9a9a" stroke-width="0.65"/><line x1="698.64" y1="260.17" x2="753.86" y2="319.65" stroke="#9a9a9a" stroke-width="0.65"/><line x1="708.10" y1="259.98" x2="765.93" y2="319.37" stroke="#9a9a9a" stroke-width="0.65"/><line x1="717.56" y1="259.79" x2="777.97" y2="319.08" stroke="#9a9a9a" stroke-width="0.65"/><line x1="487.69" y1="266.26" x2="728.91" y2="261.40" stroke="#585858" stroke-width="0.5"/><line x1="487.58" y1="268.16" x2="730.86" y2="263.22" stroke="#9a9a9a" stroke-width="0.65"/><line x1="487.47" y1="270.08" x2="732.83" y2="265.08" stroke="#585858" stroke-width="0.5"/><line x1="487.35" y1="272.05" x2="734.85" y2="266.97" stroke="#9a9a9a" stroke-width="0.65"/><line x1="487.24" y1="274.04" x2="736.89" y2="268.90" stroke="#585858" stroke-width="0.5"/><line x1="487.12" y1="276.07" x2="738.98" y2="270.85" stroke="#9a9a9a" stroke-width="0.65"/><line x1="487.00" y1="278.14" x2="741.10" y2="272.85" stroke="#585858" stroke-width="0.5"/><line x1="486.87" y1="280.25" x2="743.25" y2="274.87" stroke="#9a9a9a" stroke-width="0.65"/><line x1="486.75" y1="282.39" x2="745.45" y2="276.94" stroke="#585858" stroke-width="0.5"/><line x1="486.62" y1="284.58" x2="747.69" y2="279.04" stroke="#9a9a9a" stroke-width="0.65"/><line x1="486.49" y1="286.80" x2="749.97" y2="281.18" stroke="#585858" stroke-width="0.5"/><line x1="486.36" y1="289.07" x2="752.29" y2="283.36" stroke="#9a9a9a" stroke-width="0.65"/><line x1="486.22" y1="291.38" x2="754.65" y2="285.59" stroke="#585858" stroke-width="0.5"/><line x1="486.09" y1="293.74" x2="757.06" y2="287.85" stroke="#9a9a9a" stroke-width="0.65"/><line x1="485.95" y1="296.14" x2="759.52" y2="290.16" stroke="#585858" stroke-width="0.5"/><line x1="485.80" y1="298.59" x2="762.02" y2="292.51" stroke="#9a9a9a" stroke-width="0.65"/><line x1="485.66" y1="301.08" x2="764.57" y2="294.91" stroke="#585858" stroke-width="0.5"/><line x1="485.51" y1="303.63" x2="767.18" y2="297.35" stroke="#9a9a9a" stroke-width="0.65"/><line x1="485.36" y1="306.23" x2="769.83" y2="299.85" stroke="#585858" stroke-width="0.5"/><line x1="485.20" y1="308.88" x2="772.54" y2="302.39" stroke="#9a9a9a" stroke-width="0.65"/><line x1="485.04" y1="311.59" x2="775.30" y2="304.99" stroke="#585858" stroke-width="0.5"/><line x1="484.88" y1="314.35" x2="778.12" y2="307.64" stroke="#9a9a9a" stroke-width="0.65"/><line x1="484.72" y1="317.17" x2="781.00" y2="310.34" stroke="#585858" stroke-width="0.5"/><line x1="484.55" y1="320.05" x2="783.94" y2="313.10" stroke="#9a9a9a" stroke-width="0.65"/><line x1="484.38" y1="322.99" x2="786.94" y2="315.92" stroke="#585858" stroke-width="0.5"/><path d="M500 267.5 L504.5 268.5 M500 270 L504.5 271" stroke="#a8a8a8" stroke-width="0.9"/><rect x="501" y="277" width="2.2" height="1.4" fill="#9a9a9a"/><rect x="501" y="282" width="2.2" height="1.4" fill="#9a9a9a"/><rect x="501" y="286" width="2.2" height="1.4" fill="#9a9a9a"/><rect x="501" y="290" width="2.2" height="1.4" fill="#9a9a9a"/><path d="M486.2 264.5 L482.6 326" stroke="#f2f2f2" stroke-width="1.2"/><path d="M492 262.4 L579.6 261.0" stroke="#f4f4f4" stroke-width="1"/><path d="M493 261.2 L500 260.6" stroke="#666" stroke-width="0.7"/><polygon points="728.5,258.8 743,258.8 765,279.5 749.5,279.5" fill="#d6d6d6"/><polygon points="731.9,260.2 743.9,260.2 747.2,262.6 735.2,262.6" fill="#a8a8a8"/><polygon points="735.2,262.6 747.2,262.6 748.2,263.8 736.2,263.8" fill="#ececec"/><polygon points="736.5,264.9 748.5,264.9 751.8,267.3 739.8,267.3" fill="#a8a8a8"/><polygon points="739.8,267.3 751.8,267.3 752.8,268.5 740.8,268.5" fill="#ececec"/><polygon points="741.1,269.6 753.1,269.6 756.4,272.0 744.4,272.0" fill="#a8a8a8"/><polygon points="744.4,272.0 756.4,272.0 757.4,273.2 745.4,273.2" fill="#ececec"/><polygon points="745.7,274.3 757.7,274.3 761.0,276.7 749.0,276.7" fill="#a8a8a8"/><polygon points="749.0,276.7 761.0,276.7 762.0,277.9 750.0,277.9" fill="#ececec"/><path d="M728.8 259.2 L753 283" stroke="#f4f4f4" stroke-width="0.8"/><path d="M583 325.3 L723 322.6" stroke="#d6d6d6" stroke-width="1"/><rect x="731" y="321.9" width="3" height="1.1" rx="0.5" fill="#d8d8d8"/><rect x="745" y="321.7" width="3" height="1.1" rx="0.5" fill="#d8d8d8"/><rect x="752" y="321.5" width="12.5" height="1.1" rx="0.5" fill="#d8d8d8"/><rect x="768" y="321.2" width="13" height="1.1" rx="0.5" fill="#d8d8d8"/><ellipse cx="795.5" cy="315" rx="7" ry="1.6" fill="#c4ecd2" opacity="0.7"/><ellipse cx="791" cy="315" rx="1.8" ry="1.1" fill="#26a05c"/><ellipse cx="795.2" cy="315" rx="1.3" ry="1.1" fill="#26a05c"/><ellipse cx="800" cy="315" rx="1.9" ry="1.1" fill="#26a05c"/><path d="M483.7 326 V294" stroke="#2020b0" stroke-width="1.1"/><path d="M481.8 296 L483.7 291.7 L485.6 296 Z" fill="#2020b0"/><path d="M484 325.8 H519.8" stroke="#b01818" stroke-width="1.3"/><path d="M484.8 324 V312" stroke="#2a8a4a" stroke-width="0.6" opacity="0.6"/><path d="M615.8 198.8 L624.9 198.8 L624.9 206 L624.6 211.5 L625.5 213 L629 214.5 L631.8 217.5 L633.6 222.6 L635.5 230 L634.3 240 L631.3 245 L630.7 247 L629.5 255 L628.1 265 L627 275 L626.1 280 L626 287 L621.5 287 L620.5 275 L621.5 265 L622.5 255 L621 248 L617.9 255 L618.4 265 L619 275 L618.5 287 L613.3 287 L612.7 280 L613.3 265 L612.2 250 L612.6 245 L613 235 L613 231.4 L608.4 230.3 L608.4 222.6 L609 216 L610 212 L610.2 207 L611.2 206.5 L612.2 207.5 L613 211 L614.5 212 L616 213.5 L617 211.6 L617 206.4 L615.8 205 Z" fill="#ffffff" stroke="#fbfffb" stroke-width="2.5" stroke-linejoin="round"/><path d="M615.8 198.8 L624.9 198.8 L624.9 206 L624.6 211.5 L625.5 213 L629 214.5 L631.8 217.5 L633.6 222.6 L635.5 230 L634.3 240 L631.3 245 L630.7 247 L629.5 255 L628.1 265 L627 275 L626.1 280 L626 287 L621.5 287 L620.5 275 L621.5 265 L622.5 255 L621 248 L617.9 255 L618.4 265 L619 275 L618.5 287 L613.3 287 L612.7 280 L613.3 265 L612.2 250 L612.6 245 L613 235 L613 231.4 L608.4 230.3 L608.4 222.6 L609 216 L610 212 L610.2 207 L611.2 206.5 L612.2 207.5 L613 211 L614.5 212 L616 213.5 L617 211.6 L617 206.4 L615.8 205 Z" fill="#2f8b58"/><ellipse cx="630.2" cy="232" rx="0.8" ry="3.4" fill="#d8f0dc"/><rect x="617.5" y="191.3" width="7.4" height="7.5" fill="#1515b5"/><rect x="601.5" y="280.6" width="7" height="4.5" fill="#1cc4cc"/><rect x="603.3" y="284.4" width="7.4" height="4.2" fill="#b51a22"/><rect x="602.5" y="287.6" width="8.5" height="7.4" fill="#1cc4cc"/><rect x="630.4" y="280" width="6.6" height="4.5" fill="#1cc4cc"/><rect x="631.8" y="284" width="7.8" height="4.5" fill="#b51a22"/><rect x="633.7" y="287.8" width="7.8" height="7.2" fill="#1cc4cc"/><path d="M611 290 L617 289 M626 289 L633 290" stroke="#00d020" stroke-width="0.8"/><rect x="616" y="280.6" width="8" height="9" fill="#10d010"/><rect x="619" y="287" width="7.5" height="8" fill="#10c810"/></svg>
</body></html>
